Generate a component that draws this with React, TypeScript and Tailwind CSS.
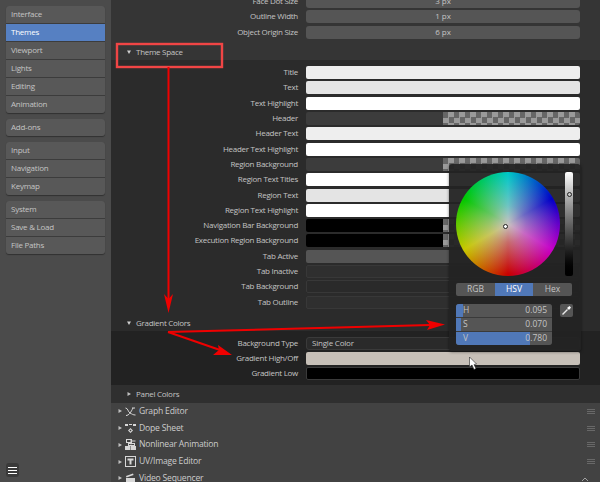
import React from 'react';

const FONT = "font-['Open_Sans',sans-serif]";

const navGroups = [
  ['Interface', 'Themes', 'Viewport', 'Lights', 'Editing', 'Animation'],
  ['Add-ons'],
  ['Input', 'Navigation', 'Keymap'],
  ['System', 'Save & Load', 'File Paths'],
];

type Kind = 'white' | 'soft' | 'light' | 'checker' | 'blackChecker' | 'grey' | 'dark' | 'darker';

const themeRows: { label: string; kind: Kind }[] = [
  { label: 'Title', kind: 'light' },
  { label: 'Text', kind: 'soft' },
  { label: 'Text Highlight', kind: 'white' },
  { label: 'Header', kind: 'checker' },
  { label: 'Header Text', kind: 'light' },
  { label: 'Header Text Highlight', kind: 'white' },
  { label: 'Region Background', kind: 'checker' },
  { label: 'Region Text Titles', kind: 'white' },
  { label: 'Region Text', kind: 'soft' },
  { label: 'Region Text Highlight', kind: 'white' },
  { label: 'Navigation Bar Background', kind: 'blackChecker' },
  { label: 'Execution Region Background', kind: 'blackChecker' },
  { label: 'Tab Active', kind: 'grey' },
  { label: 'Tab Inactive', kind: 'dark' },
  { label: 'Tab Background', kind: 'darker' },
  { label: 'Tab Outline', kind: 'dark' },
];

function Row({ label, children }: { label: string; children: React.ReactNode }) {
  return (
    <div className="flex h-[15.3px] items-center">
      <div className="w-[187px] pb-px text-right text-[8px] leading-none tracking-[-0.28px] whitespace-nowrap text-[#c4c4c4]">{label}</div>
      <div className="ml-2 w-[274px]">{children}</div>
    </div>
  );
}

function Swatch({ kind }: { kind: Kind }) {
  const base = 'h-[13px] rounded-[2px] overflow-hidden';
  const checker = 'flex-1 bg-[repeating-conic-gradient(#9a9a9a_0_25%,#666666_0_50%)] bg-[length:11px_11px]';
  if (kind === 'checker') {
    return (
      <div className={`${base} flex`}>
        <div className="w-[137px] bg-[#3c3c3c]" />
        <div className={checker} />
      </div>
    );
  }
  if (kind === 'blackChecker') {
    return (
      <div className={`${base} flex`}>
        <div className="w-[137px] bg-black" />
        <div className={checker} />
      </div>
    );
  }
  const colors: Record<string, string> = {
    white: 'bg-white',
    soft: 'bg-[#e4e4e4]',
    light: 'bg-[#eeeeee]',
    grey: 'bg-[#555555]',
    dark: 'bg-[#2f2f2f] border border-[#383838]',
    darker: 'bg-[#2a2a2a] border border-[#383838]',
  };
  return <div className={`${base} ${colors[kind]}`} />;
}

function NumberField({ value }: { value: string }) {
  return (
    <div className="flex h-[13px] items-center justify-center rounded-[3px] bg-[#555555] pb-px text-[8px] text-[#c4c4c4]">
      {value}
    </div>
  );
}

function Caret({ open }: { open?: boolean }) {
  return (
    <svg width="6" height="6" viewBox="0 0 6 6" className="shrink-0">
      {open ? <path d="M1 1.5h4L3 5z" fill="#d0d0d0" /> : <path d="M1.5 1v4L5 3z" fill="#c0c0c0" />}
    </svg>
  );
}

function GraphIcon() {
  return (
    <svg width="11" height="11" viewBox="0 0 11 11" fill="none" stroke="#d8d8d8" strokeWidth="1">
      <path d="M0.5 2 C3 2 3 6 5 7 S8 9 10.5 9" />
      <path d="M1 9.5 C4 9.5 6 6 8 2" />
      <path d="M7 2h3" />
    </svg>
  );
}

function DopeIcon() {
  return (
    <svg width="11" height="11" viewBox="0 0 11 11" fill="#d8d8d8">
      <rect x="0" y="1" width="3" height="2" />
      <rect x="4" y="1" width="3" height="1" />
      <rect x="8" y="1" width="3" height="2" />
      <path d="M5.5 5 L8 7.5 L5.5 10 L3 7.5 Z M5.5 6.5 L4.5 7.5 L5.5 8.5 L6.5 7.5 Z" fillRule="evenodd" />
    </svg>
  );
}

function NlaIcon() {
  return (
    <svg width="11" height="11" viewBox="0 0 11 11" fill="none" stroke="#d8d8d8" strokeWidth="1">
      <rect x="1.5" y="0.5" width="5" height="3" />
      <path d="M6.5 2h4M6 0.5v5" />
      <rect x="3.5" y="4.5" width="6" height="2" />
      <rect x="0.5" y="7.5" width="4" height="3" fill="#d8d8d8" />
      <rect x="6" y="7.5" width="4.5" height="3" fill="#d8d8d8" />
    </svg>
  );
}

function UvIcon() {
  return (
    <svg width="11" height="11" viewBox="0 0 11 11" fill="none" stroke="#d8d8d8" strokeWidth="1">
      <rect x="0.5" y="0.5" width="10" height="10" />
      <path d="M2.5 2.5h6v2h-2v4h-2v-4h-2z" fill="#d8d8d8" stroke="none" />
    </svg>
  );
}

function VideoIcon() {
  return (
    <svg width="11" height="11" viewBox="0 0 11 11" fill="#d8d8d8">
      <path d="M1 3 L8 0.5 L8.6 2 L1.5 4.5z" />
      <rect x="1" y="5" width="9" height="6" />
    </svg>
  );
}

const editors = [
  { label: 'Graph Editor', icon: <GraphIcon /> },
  { label: 'Dope Sheet', icon: <DopeIcon /> },
  { label: 'Nonlinear Animation', icon: <NlaIcon /> },
  { label: 'UV/Image Editor', icon: <UvIcon /> },
  { label: 'Video Sequencer', icon: <VideoIcon /> },
];

function ColorPopup() {
  return (
    <div className="absolute left-[449px] top-[164px] w-[132px] h-[187px] rounded-[3px] bg-[#232323]/95 p-[7px] pt-2 shadow-[0_1px_3px_rgba(0,0,0,0.5)]">
      <div className="flex h-[104px]">
        {/* wheel */}
        <div className="relative h-[104px] w-[104px] rounded-full bg-[conic-gradient(#00c8c8,#0000c8,#c800c8,#c80000,#c8c800,#00c800,#00c8c8)]">
          <div className="absolute inset-0 rounded-full bg-[radial-gradient(circle,#c7c2c0_0%,rgba(199,194,192,0.55)_25%,rgba(199,194,192,0)_68%)]" />
          <div className="absolute left-[47px] top-[52px] h-[5px] w-[5px] rounded-full border border-[#222222] bg-white" />
        </div>
        {/* value bar */}
        <div className="relative ml-[5px] h-[104px] w-[8px] rounded-[2px] bg-gradient-to-b from-white to-black">
          <div className="absolute left-[1.5px] top-[20px] h-[5px] w-[5px] rounded-full border border-[#222222] bg-[#c8c8c8]" />
        </div>
      </div>
      <div className="mt-[7px] flex h-[13px] w-[116px] overflow-hidden rounded-[2px] bg-[#555555] text-[8.5px] leading-[12px] text-[#c4c4c4] text-center">
        <div className="w-[39px]">RGB</div>
        <div className="w-[38px] bg-[#5078b8] text-white">HSV</div>
        <div className="w-[39px]">Hex</div>
      </div>
      <div className="mt-2 flex">
        <div className="flex h-[41px] w-[96px] flex-col gap-px overflow-hidden rounded-[3px] bg-[#3a3a3a] text-[8.5px] text-[#c4c4c4]">
          <Slider label="H" value="0.095" fill="w-[7px]" />
          <Slider label="S" value="0.070" fill="w-[5px]" />
          <Slider label="V" value="0.780" fill="w-[74px]" />
        </div>
        <div className="ml-2 flex h-[13px] w-[13px] items-center justify-center rounded-[2px] bg-[#555555]">
          <svg width="11" height="11" viewBox="0 0 11 11" fill="none">
            <path d="M1.5 9.5 L6.5 4.5" stroke="#e8e8e8" strokeWidth="1.5" />
            <path d="M6 3 L8.5 1 L10 2.5 L8 5z" fill="#ffffff" />
          </svg>
        </div>
      </div>
    </div>
  );
}

function Slider({ label, value, fill }: { label: string; value: string; fill: string }) {
  return (
    <div className="relative flex h-[13px] items-center justify-between bg-[#555555] pb-px pl-[7px] pr-[5px]">
      <div className={`absolute inset-y-0 left-0 bg-[#5078b8] ${fill}`} />
      <span className="relative">{label}</span>
      <span className="relative">{value}</span>
    </div>
  );
}

function Annotations() {
  return (
    <svg className="absolute inset-0 pointer-events-none" width="600" height="482" viewBox="0 0 600 482" fill="none">
      <rect x="117" y="44" width="105" height="23" stroke="#f04545" strokeWidth="2.4" />
      <path d="M168.5 67 V300" stroke="#f00000" strokeWidth="2" />
      <path d="M168.5 313 L164 294 L168.5 299 L173 294 Z" fill="#f00000" />
      <path d="M168 332 L430 325" stroke="#f00000" strokeWidth="2" />
      <path d="M445 324.5 L426 320 L430 325 L427 330 Z" fill="#f00000" />
      <path d="M168 332 L220 350" stroke="#f00000" strokeWidth="2" />
      <path d="M232 355 L213 355 L219 350 L218 345 Z" fill="#f00000" />
      {/* mouse cursor */}
      <path d="M469.5 357 V367 L472 365 L474 369.5 L476 368.5 L474 364.5 L476.5 364 Z" fill="#ffffff" stroke="#222222" strokeWidth="0.6" />
      {/* scroll chevron */}
      <path d="M582 481 L585 478 L588 481" stroke="#a0a0a0" strokeWidth="1" />
    </svg>
  );
}

export default function App() {
  return (
    <div className={`relative flex h-[482px] w-[600px] overflow-hidden bg-[#333333] ${FONT}`}>
      {/* Sidebar */}
      <div className="flex w-[111px] shrink-0 flex-col bg-[#4b4b4b] pl-[6px] pr-[6px] pt-[6px]">
        <div className="flex flex-col gap-[6px]">
          {navGroups.map((group, i) => (
            <div key={i} className="flex flex-col gap-px overflow-hidden rounded-[3px] bg-[#3c3c3c] shadow-[0_1px_1px_rgba(0,0,0,0.35)]">
              {group.map(item => (
                <div
                  key={item}
                  className={`flex h-[17px] items-center pb-[2px] pl-[5px] text-[8px] tracking-[-0.25px] ${
                    item === 'Themes' ? 'bg-[#5680c2] text-white' : 'bg-[#585858] text-[#c4c4c4]'
                  }`}
                >
                  {item}
                </div>
              ))}
            </div>
          ))}
        </div>
        <div className="mt-auto mb-[5px] flex h-[14px] w-[13px] flex-col items-center justify-center gap-[2px] rounded-[3px] bg-[#3a3a3a]">
          <div className="h-px w-[9px] bg-white" />
          <div className="h-px w-[9px] bg-white" />
          <div className="h-px w-[9px] bg-white" />
        </div>
      </div>

      {/* Main */}
      <div className="flex min-w-0 flex-1 flex-col">
        <div className="h-[44px] shrink-0 overflow-hidden bg-[#353535]">
          <div className="-mt-[6px]">
            <Row label="Face Dot Size"><NumberField value="3 px" /></Row>
            <Row label="Outline Width"><NumberField value="1 px" /></Row>
            <Row label="Object Origin Size"><NumberField value="6 px" /></Row>
          </div>
        </div>
        <div className="flex h-[16px] shrink-0 items-center gap-[4px] bg-[#353535] pl-[15px] text-[8px] tracking-[-0.28px] text-[#c4c4c4]">
          <Caret open />
          <span>Theme Space</span>
        </div>
        <div className="h-[255px] shrink-0 bg-[#2b2b2b] pt-[5px]">
          {themeRows.map(row => (
            <Row key={row.label} label={row.label}><Swatch kind={row.kind} /></Row>
          ))}
        </div>
        <div className="flex h-[16px] shrink-0 items-center gap-[4px] bg-[#2b2b2b] pl-[15px] text-[8px] tracking-[-0.28px] text-[#c4c4c4]">
          <Caret open />
          <span>Gradient Colors</span>
        </div>
        <div className="h-[54px] shrink-0 bg-[#222222] pt-[4.5px]">
          <Row label="Background Type">
            <div className="flex h-[13px] items-center rounded-[3px] border border-[#3a3a3a] bg-[#2a2a2a] pb-px pl-[5px] text-[8px] tracking-[-0.2px] text-[#c4c4c4]">
              Single Color
            </div>
          </Row>
          <Row label="Gradient High/Off"><div className="h-[13px] rounded-[2px] bg-[#c7c0b8]" /></Row>
          <Row label="Gradient Low"><div className="h-[13px] rounded-[2px] border border-[#3a3a3a] bg-black" /></Row>
        </div>
        <div className="flex h-[18px] shrink-0 items-center gap-[4px] bg-[#2f2f2f] pl-[15px] text-[8px] tracking-[-0.28px] text-[#c4c4c4]">
          <Caret />
          <span>Panel Colors</span>
        </div>
        <div className="shrink-0 bg-[#424242] pb-2 flex-1">
          {editors.map((e, i) => (
            <div key={e.label} className="flex h-[16.75px] items-center pl-[6px] pr-[5px] text-[8.6px] tracking-[-0.2px] text-[#cccccc]">
              <Caret />
              <div className="ml-[2px] mr-[3px] flex w-[11px] items-center justify-center">{e.icon}</div>
              <span>{e.label}</span>
              {i < 4 && (
                <div className="ml-auto flex w-[8px] flex-col gap-px">
                  <div className="h-px bg-[#686868]" />
                  <div className="h-px bg-[#686868]" />
                  <div className="h-px bg-[#686868]" />
                </div>
              )}
            </div>
          ))}
        </div>
      </div>

      <ColorPopup />
      <Annotations />
    </div>
  );
}
